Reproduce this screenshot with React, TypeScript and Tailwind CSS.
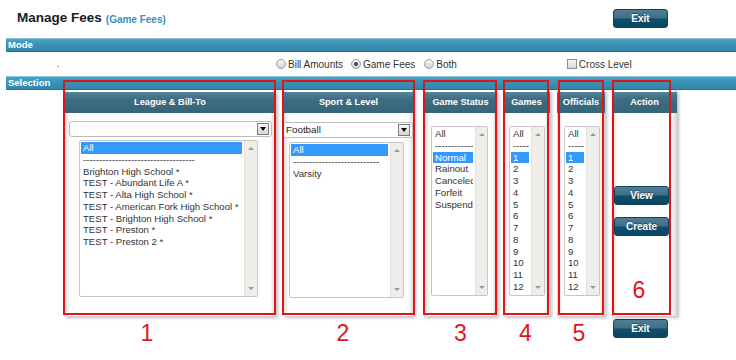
import clsx from "clsx";
import { type ReactNode } from "react";

// Manage Fees — annotated selection screen. Red boxes + numbers are the
// annotation layer drawn over each column.

const dashes = (n: number) => "-".repeat(n);

function Btn({ children, className }: { children: ReactNode; className?: string }) {
  return (
    <button
      className={clsx(
        "block h-[19px] w-[55px] rounded-[3px] border border-[#0c435e] text-[10px] font-bold text-white",
        "bg-[linear-gradient(#4f7f95,#3c6e85_48%,#0f4e6d_52%,#0a4764)] [text-shadow:0_-1px_0_rgba(0,0,0,0.35)]",
        className,
      )}
    >
      {children}
    </button>
  );
}

function Bar({ children, className }: { children: ReactNode; className?: string }) {
  return (
    <div
      className={clsx(
        "ml-[6px] flex h-[14px] items-center border-t border-b border-t-[#86c3da] border-b-[#2a6e8e] pl-[2px]",
        "bg-[linear-gradient(#4fa3c4,#3a90b4_50%,#3287ab)] text-[9.5px] font-bold text-white",
        className,
      )}
    >
      {children}
    </div>
  );
}

function Radio({ checked }: { checked?: boolean }) {
  return (
    <span className="grid size-[10px] place-items-center rounded-full border border-[#9c9c9c] bg-[linear-gradient(#f7f7f7,#d3d3d3)]">
      {checked ? <span className="size-[4px] rounded-full bg-[#1b4b78]" /> : null}
    </span>
  );
}

function Dropdown({ value, className }: { value?: string; className?: string }) {
  return (
    <div
      className={clsx(
        "flex h-[16px] items-center rounded-[3px] border border-[#bcbcbc] bg-white pl-[2px] pr-[2px]",
        className,
      )}
    >
      <span className="flex-1 text-[9.8px] text-[#222]">{value}</span>
      <span className="grid h-[12px] w-[12px] place-items-center border border-[#7c7c7c] bg-[linear-gradient(#f7f7f7,#d6d6d6)]">
        <span className="h-0 w-0 border-x-[3px] border-t-[4px] border-x-transparent border-t-black" />
      </span>
    </div>
  );
}

function ListBox({
  items,
  selected,
  className,
  track = "w-[13px]",
}: {
  items: string[];
  selected: number;
  className?: string;
  track?: string;
}) {
  return (
    <div
      className={clsx(
        "flex overflow-hidden rounded-[2px] border border-[#c6c6c6] bg-white",
        className,
      )}
    >
      <ul className="min-w-0 flex-1 overflow-hidden pl-[1px] pr-[2px] pt-[1px] text-[9.6px] leading-[11.75px] text-[#333]">
        {items.map((it, i) => (
          <li
            key={i}
            className={clsx(
              "overflow-hidden whitespace-nowrap pl-[2px]",
              i === selected && "bg-[#3399ff] text-white",
            )}
          >
            {it}
          </li>
        ))}
      </ul>
      <div
        className={clsx(
          "flex shrink-0 flex-col items-center justify-between border-l border-[#e3e1dd] bg-[#efeeeb] pb-[6px] pt-[6px]",
          track,
        )}
      >
        <span className="h-0 w-0 border-x-[3px] border-b-[3px] border-x-transparent border-b-[#9a9a9a]" />
        <span className="h-0 w-0 border-x-[3px] border-t-[3px] border-x-transparent border-t-[#9a9a9a]" />
      </div>
    </div>
  );
}

function Column({
  title,
  className,
  red,
  below,
  children,
}: {
  title: string;
  className?: string;
  red: string;
  below?: ReactNode;
  children: ReactNode;
}) {
  return (
    <div className={clsx("flex shrink-0 flex-col", className)}>
      <div
        className={clsx(
          "relative flex h-[226px] flex-col pt-[2px] shadow-[2px_2px_3px_rgba(0,0,0,0.25)]",
          "bg-[linear-gradient(to_right,#d8d5cf,#fff_6px,#fff_calc(100%_-_6px),#d8d5cf)]",
        )}
      >
        <div className="flex h-[21px] items-center justify-center bg-[linear-gradient(#55839a,#3e6d82_35%,#35657a)] text-[9.2px] font-bold text-white">
          {title}
        </div>
        {children}
        {/* annotation outline */}
        <div className={clsx("pointer-events-none absolute border-2 border-[#e0141b]", red)} />
      </div>
      {below}
    </div>
  );
}

function Num({ n, className }: { n: string; className?: string }) {
  return (
    <div className={clsx("mt-[6px] text-center text-[23px] leading-none text-[#e0141b]", className)}>
      {n}
    </div>
  );
}

const numbers = ["1", "2", "3", "4", "5", "6", "7", "8", "9", "10", "11", "12"];

export default function App() {
  return (
    <div className="h-[360px] w-[736px] overflow-hidden bg-white font-['Liberation_Sans',Arial,sans-serif] text-[#333]">
      <div className="flex h-[37px] items-center pl-[17px] pr-[68px]">
        <h1 className="text-[13.5px] font-bold text-[#1b1b1b]">Manage Fees</h1>
        <span className="ml-[4px] mt-[2px] text-[10px] font-bold text-[#3b8fc0]">(Game Fees)</span>
        <Btn className="ml-auto">Exit</Btn>
      </div>

      <Bar className="mt-[1px]">Mode</Bar>
      <div className="flex h-[24px] items-center text-[10px] text-[#333]">
        <span className="ml-[57px] mt-[4px] h-[1px] w-[2px] bg-[#e58a8a]" />
        <div className="ml-[217px] flex items-center">
          <Radio />
          <span className="ml-[2px] mr-[8px]">Bill Amounts</span>
          <Radio checked />
          <span className="ml-[2px] mr-[9px]">Game Fees</span>
          <Radio />
          <span className="ml-[2px]">Both</span>
          <span className="ml-[110px] size-[10px] border border-[#8e8e8e] bg-[linear-gradient(#f4f4f4,#d8d8d8)]" />
          <span className="ml-[2px]">Cross Level</span>
        </div>
      </div>
      <Bar>Selection</Bar>

      <div className="flex items-start pl-[64px]">
        <Column
          title="League & Bill-To"
          className="w-[212px]"
          red="-left-[1px] -top-[10px] bottom-[1px] right-0"
          below={<Num n="1" className="pr-[46px]" />}
        >
          <Dropdown className="ml-[5px] mr-[4px] mt-[8px]" />
          <ListBox
            className="ml-[15px] mr-[18px] mt-[3px] h-[157px]"
            selected={0}
            items={[
              "All",
              dashes(35),
              "Brighton High School *",
              "TEST - Abundant Life A *",
              "TEST - Alta High School *",
              "TEST - American Fork High School *",
              "TEST - Brighton High School *",
              "TEST - Preston *",
              "TEST - Preston 2 *",
            ]}
          />
        </Column>

        <Column
          title="Sport & Level"
          className="ml-[7px] w-[131px]"
          red="-left-[1px] -top-[10px] bottom-[1px] -right-[1px]"
          below={<Num n="2" className="pr-[11px]" />}
        >
          <Dropdown value="Football" className="mr-[1px] mt-[9px]" />
          <ListBox
            className="ml-[6px] mr-[10px] mt-[4px] h-[156px]"
            selected={0}
            items={["All", dashes(27), "Varsity"]}
          />
        </Column>

        <Column
          title="Game Status"
          className="ml-[10px] w-[73px]"
          red="-left-[1px] -top-[10px] bottom-[1px] right-0"
          below={<Num n="3" />}
        >
          <ListBox
            className="ml-[7px] mr-[9px] mt-[13px] h-[170px]"
            track="w-[12px]"
            selected={2}
            items={["All", dashes(30), "Normal", "Rainout", "Canceled", "Forfeit", "Suspended"]}
          />
        </Column>

        <Column
          title="Games"
          className="ml-[6px] w-[47px]"
          red="left-0 -top-[10px] bottom-[1px] right-[1px]"
          below={<Num n="4" className="pr-[2px]" />}
        >
          <ListBox
            className="ml-[6px] mr-[5px] mt-[13px] h-[170px]"
            selected={2}
            items={["All", dashes(20), ...numbers]}
          />
        </Column>

        <Column
          title="Officials"
          className="ml-[7px] w-[48px]"
          red="left-[1px] -top-[10px] bottom-[1px] right-[1px]"
          below={<Num n="5" className="pr-[4px]" />}
        >
          <ListBox
            className="ml-[7px] mr-[5px] mt-[13px] h-[170px]"
            selected={2}
            items={["All", dashes(20), ...numbers]}
          />
        </Column>

        <Column
          title="Action"
          className="ml-[7px] w-[65px]"
          red="left-0 -top-[10px] bottom-[1px] right-[6px]"
          below={<Btn className="ml-[1px] mt-[3px]">Exit</Btn>}
        >
          <Btn className="ml-[2px] mt-[73px]">View</Btn>
          <Btn className="ml-[2px] mt-[12px]">Create</Btn>
          <div className="mt-[43px] pr-[11px] text-center text-[23px] leading-none text-[#e0141b]">6</div>
        </Column>
      </div>
    </div>
  );
}
